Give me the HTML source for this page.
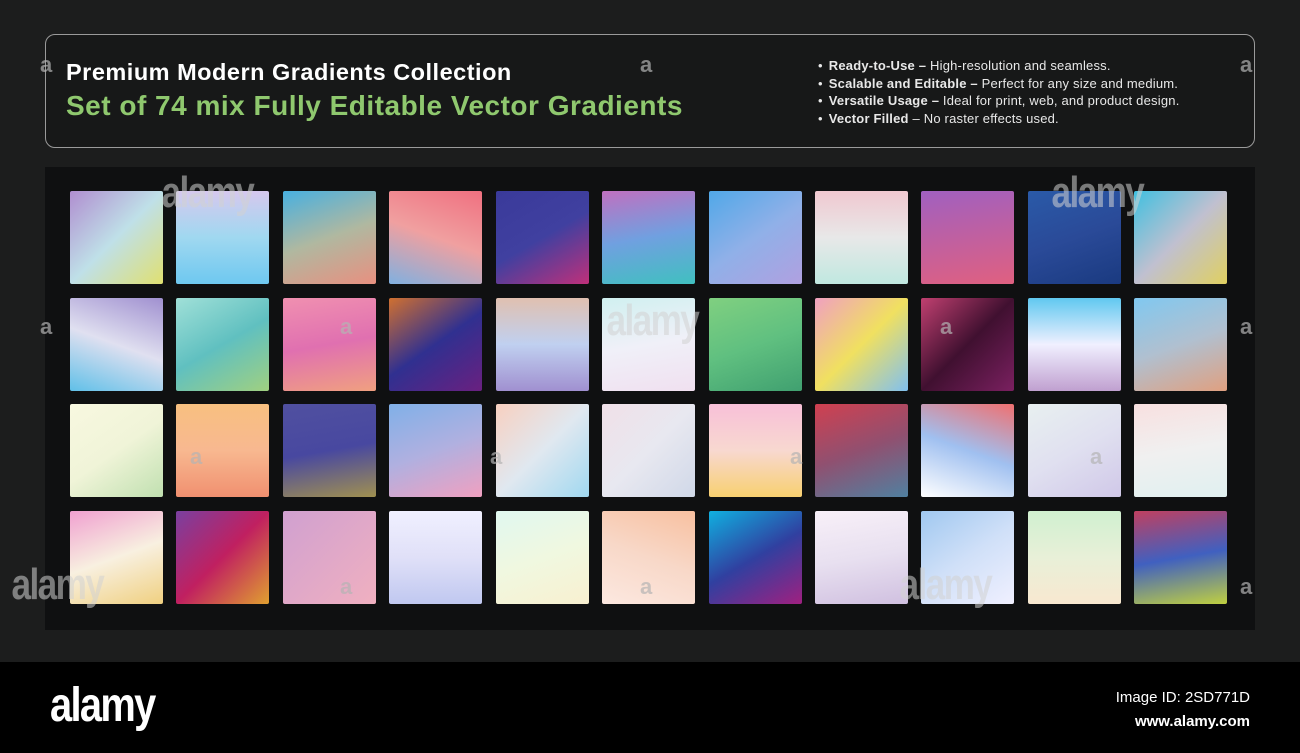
<!DOCTYPE html>
<html><head><meta charset="utf-8"><style>
*{margin:0;padding:0;box-sizing:border-box}
body{width:1300px;height:753px;background:#1c1d1d;font-family:"Liberation Sans",sans-serif;position:relative;overflow:hidden}
.hdr{position:absolute;left:45px;top:34px;width:1210px;height:114px;border:1px solid #9a9a9a;border-radius:10px;background:#171818}
.t1{position:absolute;left:20px;top:24px;color:#fff;font-size:23.5px;font-weight:bold;letter-spacing:0.5px}
.t2{position:absolute;left:20px;top:55px;color:#8fc86e;font-size:28px;font-weight:bold;letter-spacing:0.5px}
ul{position:absolute;left:772px;top:22px;list-style:none;color:#e8e8e8;font-size:13px;line-height:17.5px;letter-spacing:0.2px}
ul li:before{content:"•";margin-right:6px}
.panel{position:absolute;left:45px;top:167px;width:1210px;height:463px;background:#0f1011}
.tile{position:absolute;width:93px;height:93px;border-radius:2px}
.foot{position:absolute;left:0;top:662px;width:1300px;height:91px;background:#000}
.logo{position:absolute;left:50px;top:16px;color:#fff;font-size:48px;font-weight:bold;letter-spacing:-2px;transform:scaleX(0.83);transform-origin:left}
.id{position:absolute;right:50px;top:24px;color:#fff;font-size:15px;text-align:right;line-height:24px}
.wm{position:absolute;color:rgba(210,210,210,0.55);font-weight:bold;font-size:44px;letter-spacing:-2px;transform:scaleX(0.8)}
.wa{position:absolute;color:rgba(180,180,180,0.7);font-weight:bold;font-size:22px}
</style></head><body>
<div class="hdr">
<div class="t1">Premium Modern Gradients Collection</div>
<div class="t2">Set of 74 mix Fully Editable Vector Gradients</div>
<ul>
<li><b>Ready-to-Use –</b> High-resolution and seamless.</li>
<li><b>Scalable and Editable –</b> Perfect for any size and medium.</li>
<li><b>Versatile Usage –</b> Ideal for print, web, and product design.</li>
<li><b>Vector Filled</b> – No raster effects used.</li>
</ul>
</div>
<div class="panel"></div>
<div id="g"></div>
<div class="foot"><div class="logo">alamy</div><div class="id">Image ID: 2SD771D<br><b>www.alamy.com</b></div></div>
<div class="wm" style="left:150px;top:168px">alamy</div>
<div class="wm" style="left:1040px;top:168px">alamy</div>
<div class="wm" style="left:595px;top:296px">alamy</div>
<div class="wm" style="left:0px;top:560px">alamy</div>
<div class="wm" style="left:888px;top:560px">alamy</div>
<div class="wa" style="left:40px;top:52px">a</div><div class="wa" style="left:640px;top:52px">a</div><div class="wa" style="left:1240px;top:52px">a</div>
<div class="wa" style="left:40px;top:314px">a</div><div class="wa" style="left:340px;top:314px">a</div><div class="wa" style="left:940px;top:314px">a</div><div class="wa" style="left:1240px;top:314px">a</div>
<div class="wa" style="left:190px;top:444px">a</div><div class="wa" style="left:490px;top:444px">a</div><div class="wa" style="left:790px;top:444px">a</div><div class="wa" style="left:1090px;top:444px">a</div>
<div class="wa" style="left:340px;top:574px">a</div><div class="wa" style="left:640px;top:574px">a</div><div class="wa" style="left:1240px;top:574px">a</div>
<script>
var G=[
["#b08ed0,#bfe0e8,#e0e070","#d6c8ee,#a0d8f0,#6ec8f0","#48b0e0,#b0b8a0,#e89080","#f07080,#f0a0a0,#80b0e0","#3a3a9a,#4040a0,#c0307a","#c070c0,#70a0e0,#40c0c0","#50a8e8,#90b0e8,#b0a0e0","#f0c8d0,#e8e8e8,#c0e8e0","#a060c0,#c060a0,#e06080","#2a5aa8,#2a4a98,#1a3a80","#40c0e0,#c0c0d0,#e0d060"],
["#a090d0,#e0e0f0,#60c0e8","#a0e0d8,#60c0c0,#a0d080","#f090b0,#e070b0,#f0a080","#d07030,#303090,#6a2080","#e0c0b0,#c0d0f0,#a090d0","#d0f0f0,#f0f0f8,#f0e0f0","#80d080,#60c080,#40a070","#f0a0c0,#f0e060,#80c0f0","#c04070,#401030,#7a2060","#60c8f0,#f0f0ff,#c0a0d0","#80c8f0,#b0c0d0,#e0a080"],
["#f8f8e0,#f0f4d8,#c0e0b0","#f8c080,#f8b890,#f09070","#5050a0,#4848a0,#a09050","#80b0e8,#b0b0e0,#f0a0c0","#f8d0c0,#e0e8f0,#a0d8f0","#f0e0e8,#e8e8f0,#d0d8e8","#f8c0d8,#f8d8d0,#f8d070","#d04050,#905070,#5080a0","#f07070,#a0c0f0,#ffffff","#e8f0f0,#e0e0f0,#d0c8e8","#f8e0e0,#f0f0f0,#e0f0f0"],
["#f0a0d0,#f8f0e0,#f0d080","#7a40a0,#c02060,#e0a030","#d0a0d0,#e0a8c8,#f0b0c0","#f0f0ff,#e0e0f8,#c0c8f0","#e0f8f0,#f0f8e0,#f8f0d0","#f8c0a0,#f8d8c8,#fce8e0","#10b0e0,#3040a0,#a02080","#f8f0f8,#e8e0f0,#d0c0e0","#a0c8f0,#d0e0f8,#f0f0ff","#d0f0d0,#e8f0d8,#f8e8d0","#c04060,#4060c0,#c0d040"]];
var xs=[70,176,283,389,496,602,709,815,921,1028,1134],ys=[191,298,404,511],h="";
var ang=[135,180,160,200,150,170,145,180,170,160,135];
for(var r=0;r<4;r++)for(var c=0;c<11;c++)h+='<div class="tile" style="left:'+xs[c]+'px;top:'+ys[r]+'px;background:linear-gradient('+ang[(c+r*3)%11]+'deg,'+G[r][c]+')"></div>';
document.getElementById("g").innerHTML=h;
</script>
</body></html>
